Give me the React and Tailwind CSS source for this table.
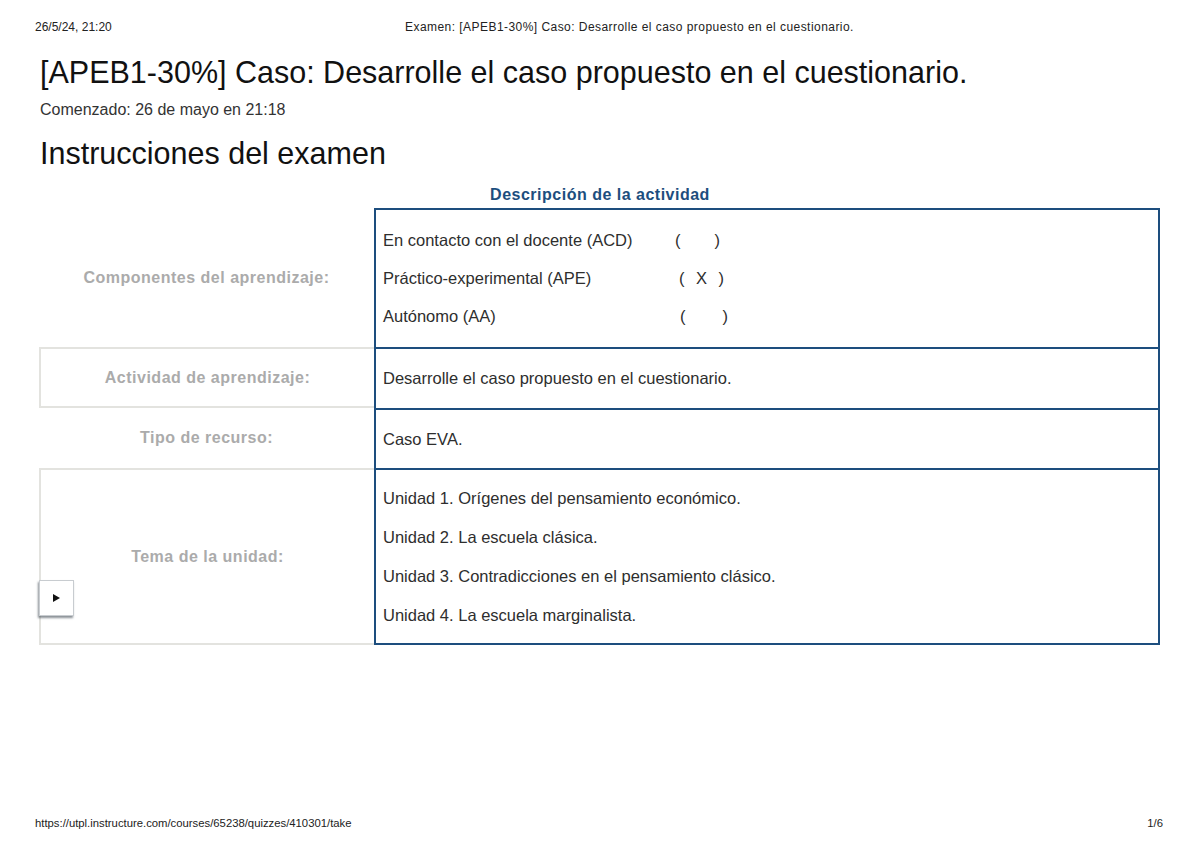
// Examen APEB1 – vista imprimible de instrucciones
const font = { fontFamily: '"Liberation Sans", Arial, sans-serif' };

const componentes = [
    { label: "En contacto con el docente (ACD)", w: "w-[292px]", mark: "", gap: "w-[34px]" },
    { label: "Práctico-experimental (APE)", w: "w-[296px]", mark: "X", gap: "w-[34px]" },
    { label: "Autónomo (AA)", w: "w-[297px]", mark: "", gap: "w-[37px]" },
];

const unidades = [
    "Unidad 1. Orígenes del pensamiento económico.",
    "Unidad 2. La escuela clásica.",
    "Unidad 3. Contradicciones en el pensamiento clásico.",
    "Unidad 4. La escuela marginalista.",
];

function Row({ label, height, boxed, last, children, extra }) {
    return (
        <div className={`flex ${height}`}>
            <div
                className={`relative w-[335px] flex items-center justify-center ${
                    boxed ? "border-2 border-r-0 border-[#e3e3df]" : ""
                }`}
            >
                <span className="text-[16px] font-bold text-[#ababab] tracking-[0.5px]">{label}</span>
                {extra}
            </div>
            <div
                className={`flex-1 border-x-2 border-t-2 border-[#1d4e7e] ${
                    last ? "border-b-2" : ""
                } px-[7px] text-[16.5px] text-[#2e2e2e] flex flex-col justify-center`}
            >
                {children}
            </div>
        </div>
    );
}

export default function App() {
    return (
        <div className="w-[1200px] h-[848px] bg-white relative text-black pt-[20px]" style={font}>
            <div className="flex items-center h-[14px] px-[35px] text-[12px] text-[#222]">
                <span className="w-[370px]">26/5/24, 21:20</span>
                <span className="tracking-[0.45px]">
                    Examen: [APEB1-30%] Caso: Desarrolle el caso propuesto en el cuestionario.
                </span>
            </div>

            <div className="px-[40px]">
                <h1 className="text-[30.5px] leading-[36px] mt-[20px] text-[#111]">
                    [APEB1-30%] Caso: Desarrolle el caso propuesto en el cuestionario.
                </h1>
                <p className="text-[16px] text-[#333] mt-[10px] leading-[20px]">Comenzado: 26 de mayo en 21:18</p>
                <h2 className="text-[30.5px] leading-[36px] mt-[15px] text-[#111]">Instrucciones del examen</h2>

                <div className="mt-[14px] text-center text-[16px] font-bold text-[#1d4e7e] leading-[20px] tracking-[0.5px]">
                    Descripción de la actividad
                </div>

                <div className="mt-[3px] -ml-[1px] w-[1121px]">
                    <Row label="Componentes del aprendizaje:" height="h-[139px]">
                        <div className="flex flex-col gap-[20px] pb-[2px]">
                            {componentes.map((c) => (
                                <div key={c.label} className="flex leading-[18px]">
                                    <span className={`inline-block ${c.w}`}>{c.label}</span>
                                    <span>(</span>
                                    <span className={`inline-block ${c.gap} text-center`}>{c.mark}</span>
                                    <span>)</span>
                                </div>
                            ))}
                        </div>
                    </Row>
                    <Row label="Actividad de aprendizaje:" height="h-[61px]" boxed>
                        Desarrolle el caso propuesto en el cuestionario.
                    </Row>
                    <Row label="Tipo de recurso:" height="h-[60px]">
                        Caso EVA.
                    </Row>
                    <Row
                        label="Tema de la unidad:"
                        height="h-[177px]"
                        boxed
                        last
                        extra={
                            <button className="absolute left-[-2px] top-[110px] w-[35px] h-[36px] bg-white border border-[#c8ccd0] shadow-[-1px_2px_2px_rgba(60,70,80,0.6)] flex items-center justify-center">
                                <svg width="7" height="8" viewBox="0 0 7 8">
                                    <path d="M0 0 L7 4 L0 8 Z" fill="#111" />
                                </svg>
                            </button>
                        }
                    >
                        <div className="flex flex-col gap-[21px] leading-[18px]">
                            {unidades.map((u) => (
                                <span key={u}>{u}</span>
                            ))}
                        </div>
                    </Row>
                </div>
            </div>

            <div className="absolute left-[35px] right-[37px] top-[815px] flex justify-between text-[11.3px] text-[#222]">
                <span>https://utpl.instructure.com/courses/65238/quizzes/410301/take</span>
                <span>1/6</span>
            </div>
        </div>
    );
}
